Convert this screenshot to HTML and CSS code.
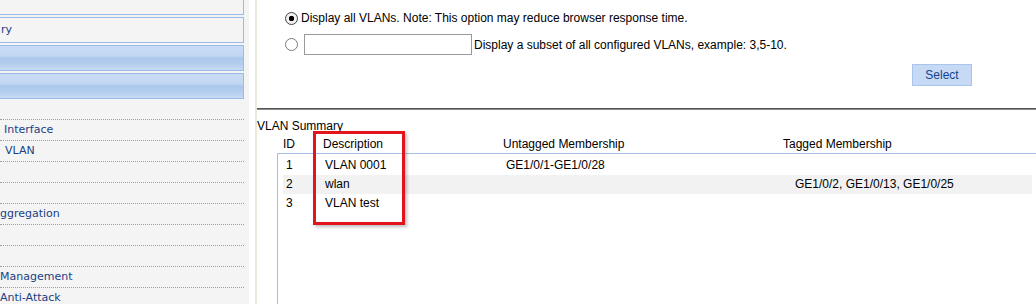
FILE: index.html
```html
<!DOCTYPE html>
<html lang="en">
<head>
  <meta charset="UTF-8" />
  <title>VLAN Summary</title>
  <link rel="stylesheet" href="styles.css">
</head>
<body>
  <!-- Navigation tree (scrolled, left part hidden) -->
  <aside class="sidebar">
    <div class="nav-box"></div>
    <div class="nav-box"><span>ry</span></div>
    <div class="nav-box open"></div>
    <div class="nav-box open"></div>
    <ul class="menu">
      <li></li>
      <li class="i4">Interface</li>
      <li class="i5">VLAN</li>
      <li></li>
      <li></li>
      <li>ggregation</li>
      <li></li>
      <li></li>
      <li>Management</li>
      <li>Anti-Attack</li>
    </ul>
  </aside>

  <div class="frame-edge"></div>

  <main class="content">
    <div class="option-row first">
      <span class="radio checked"></span>
      <span>Display all VLANs. Note: This option may reduce browser response time.</span>
    </div>
    <div class="option-row">
      <span class="radio"></span>
      <input type="text" class="vlan-input" />
      <span>Display a subset of all configured VLANs, example: 3,5-10.</span>
    </div>
    <div class="btn-row">
      <button class="btn">Select</button>
    </div>

    <hr class="divider" />

    <div class="section-title">VLAN Summary</div>
    <div class="table-head">
      <span>ID</span>
      <span>Description</span>
      <span>Untagged Membership</span>
      <span>Tagged Membership</span>
    </div>
    <div class="summary-table">
      <div class="row">
        <span>1</span><span>VLAN 0001</span><span>GE1/0/1-GE1/0/28</span><span></span>
      </div>
      <div class="row alt">
        <span>2</span><span>wlan</span><span></span><span>GE1/0/2, GE1/0/13, GE1/0/25</span>
      </div>
      <div class="row">
        <span>3</span><span>VLAN test</span><span></span><span></span>
      </div>
    </div>

    <!-- highlight annotation -->
    <div class="callout"></div>
  </main>
</body>
</html>
```

FILE: styles.css
```css
body {
  margin: 0;
  display: flex;
  height: 304px;
  overflow: hidden;
  background: #fff;
  font-family: "Liberation Sans", Arial, sans-serif;
  font-size: 12px;
  color: #000;
}

/* Sidebar */
.sidebar {
  width: 249px;
  height: 304px;
  flex: none;
  background: #f4f4f4;
  overflow: hidden;
  font-family: "DejaVu Sans", Tahoma, sans-serif;
  font-size: 11px;
  color: #1a3f85;
}

.nav-box {
  height: 24px;
  line-height: 24px;
  margin: 0 5px 0 -20px;
  border: 1px solid #99bbe8;
  background: #f4f4f4;
  white-space: nowrap;
}

.nav-box:first-child {
  margin-top: -11px;
}

.nav-box + .nav-box {
  margin-top: 2px;
}

.nav-box span {
  padding-left: 20px;
}

.nav-box.open {
  background: linear-gradient(#c9dcf5 0%, #c4d8f3 38%, #abc8ec 52%, #b4cdee 75%, #c8dbf5 100%);
}

.menu {
  list-style: none;
  margin: 0;
  padding: 0;
}

.menu li {
  height: 20px;
  line-height: 20px;
  margin-right: 5px;
  border-bottom: 1px dotted #a0a0a0;
  white-space: nowrap;
}

.menu li:last-child {
  height: 16px;
  line-height: 20px;
  border-bottom: none;
}

.menu li.i4 { padding-left: 4px; }
.menu li.i5 { padding-left: 5px; }

.frame-edge {
  width: 2px;
  flex: none;
  margin-left: 6px;
  background: #ece9d8;
}

/* Main panel */
.content {
  flex: 1;
  min-width: 0;
  position: relative;
}

.option-row {
  display: flex;
  align-items: center;
  height: 21px;
  margin-top: 6px;
  padding-left: 28px;
}

.option-row.first {
  height: 20px;
  margin-top: 8px;
}

.radio {
  width: 13px;
  height: 13px;
  flex: none;
  box-sizing: border-box;
  border-radius: 50%;
  border: 1px solid #7a7a7a;
  background: #fff;
  margin-right: 3px;
}

.radio.checked {
  border-color: #444;
  background: radial-gradient(circle, #000 0 2.4px, #f0f0f0 3px);
}

.vlan-input {
  width: 168px;
  height: 21px;
  box-sizing: border-box;
  margin: 0 2px 0 3px;
  padding: 0 3px;
  border: 1px solid #9a9a9a;
  font-family: inherit;
  font-size: 12px;
}

.btn-row {
  display: flex;
  margin-top: 9px;
  padding-left: 655px;
}

.btn {
  width: 60px;
  height: 22px;
  padding: 0;
  border: 1px solid #a9c5eb;
  background: #c6daf5;
  color: #15428b;
  font-family: inherit;
  font-size: 12px;
}

.divider {
  margin: 22px 0 0;
  border: none;
  border-top: 1px solid #555;
  border-bottom: 1px solid #8a8a8a;
}

.section-title {
  margin-top: 9px;
  line-height: 14px;
}

.table-head {
  display: grid;
  grid-template-columns: 40px 180px 280px 1fr;
  margin: 4px 0 0 26px;
  line-height: 14px;
}

.summary-table {
  margin: 2px 0 0 20px;
  padding-top: 2px;
  height: 149px;
  border-top: 1px solid #a3c0e8;
  border-left: 1px solid #a3c0e8;
}

.row {
  display: grid;
  grid-template-columns: 39px 181px 289px 1fr;
  height: 19px;
  line-height: 19px;
  margin: 0 4px 0 5px;
}

.row.alt {
  background: #f2f2f2;
}

.row span {
  padding-left: 3px;
  white-space: nowrap;
}

.callout {
  position: absolute;
  left: 56px;
  top: 131px;
  width: 92px;
  height: 94px;
  box-sizing: border-box;
  border: 3px solid #e3141c;
  box-shadow: 2px 2px 3px rgba(0, 0, 0, 0.25);
}
```
